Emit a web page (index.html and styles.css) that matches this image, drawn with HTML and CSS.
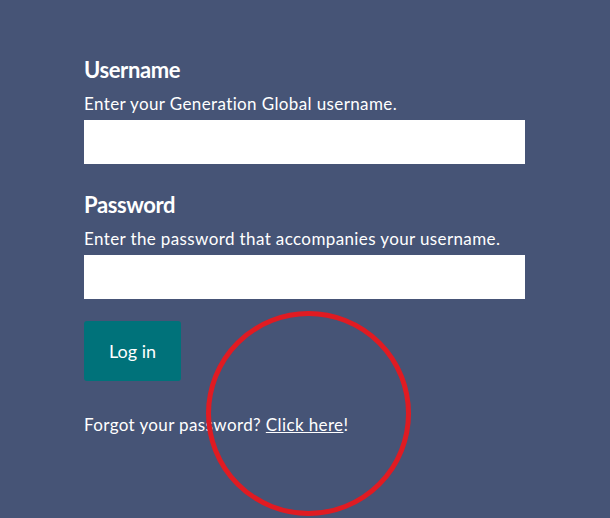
FILE: index.html
```html
<!DOCTYPE html>
<html lang="en">
<head>
<meta charset="utf-8">
<title>Log in</title>
<link rel="stylesheet" href="styles.css">
</head>
<body>
<main class="page">
  <form class="login">
    <div class="field">
      <label class="field-label" for="user">Username</label>
      <p class="field-help">Enter your Generation Global username.</p>
      <input class="field-input" id="user" type="text">
    </div>
    <div class="field">
      <label class="field-label" for="pass">Password</label>
      <p class="field-help">Enter the password that accompanies your username.</p>
      <input class="field-input" id="pass" type="password">
    </div>
    <button class="submit" type="button">Log in</button>
    <p class="forgot">Forgot your password? <a class="forgot-link" href="#">Click here</a>!</p>
  </form>
  <svg class="highlight" width="205" height="205" viewBox="0 0 205 205" aria-hidden="true">
    <circle cx="102.5" cy="102.5" r="100" fill="none" stroke="#e01b22" stroke-width="5"/>
  </svg>
</main>
</body>
</html>
```
FILE: styles.css
```css
html, body {
  margin: 0;
  padding: 0;
  background: #465476;
}
.page {
  position: relative;
  width: 610px;
  height: 518px;
  overflow: hidden;
  font-family: Lato, "Open Sans", sans-serif;
  color: #ffffff;
}
.login {
  display: flex;
  flex-direction: column;
  align-items: flex-start;
  padding: 57px 0 0 84px;
  width: 441px;
}
.field {
  display: flex;
  flex-direction: column;
  width: 100%;
  margin-bottom: 28px;
}
.field:last-of-type {
  margin-bottom: 22px;
}
.field-label {
  font-size: 22px;
  font-weight: 700;
  line-height: 26px;
  letter-spacing: -0.4px;
}
.field-help {
  margin: 9px 0 0;
  font-size: 17px;
  line-height: 24px;
  letter-spacing: 0.38px;
}
.field-input {
  margin-top: 4px;
  height: 44px;
  box-sizing: border-box;
  width: 441px;
  border: 0;
  background: #ffffff;
}
.submit {
  width: 97px;
  height: 60px;
  border: 0;
  border-radius: 3px;
  background: #00727a;
  color: #ffffff;
  font-family: inherit;
  font-size: 18px;
  padding: 0;
}
.forgot {
  margin: 32px 0 0;
  font-size: 17px;
  line-height: 24px;
  letter-spacing: 0.38px;
}
.forgot-link {
  color: #ffffff;
  text-decoration: underline;
}
.highlight {
  position: absolute;
  left: 206px;
  top: 311px;
}
```
